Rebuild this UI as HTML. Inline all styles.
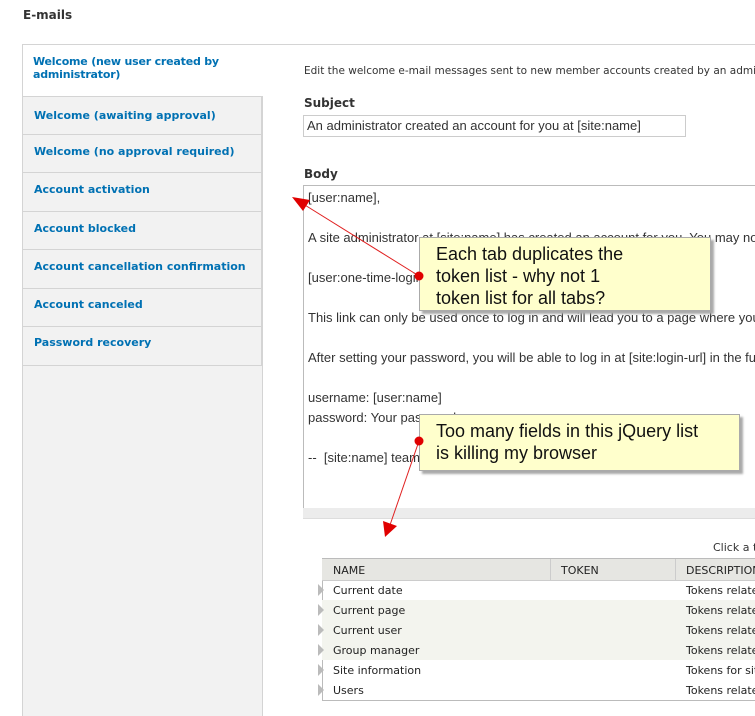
<!DOCTYPE html>
<html><head><style>
html{overflow:hidden}
body{margin:0;width:755px;height:716px;overflow:hidden;background:#fff;position:relative;font-family:"DejaVu Sans","Liberation Sans",sans-serif}
.a{position:absolute;white-space:nowrap}
.tab{position:absolute;left:22px;width:240px;background:#f2f2f2;border:1px solid #d4d4d4;border-top:none;box-sizing:border-box;color:#0071b3;font-weight:bold;font-size:11px;padding-left:11px;white-space:nowrap}
.ta{font-family:"Liberation Sans",Arial,sans-serif;font-size:13px;color:#333;left:308px}
.tr{position:absolute;left:322px;width:433px;height:20px;font-size:11px;color:#222;overflow:hidden}
.tr span{position:absolute;top:4px;white-space:nowrap}
.tri{position:absolute;left:-4px;top:4px;width:0;height:0;border-left:6px solid #bbb;border-top:6px solid transparent;border-bottom:6px solid transparent}
.call{position:absolute;background:#ffffcc;border:1px solid #aaa;box-shadow:3px 3px 2px #aaa;font-family:"Liberation Sans",Arial,sans-serif;font-size:18px;color:#111;line-height:22px;padding:5px 0 0 16px;box-sizing:border-box;white-space:nowrap}
</style></head><body>
<div class="a" style="left:23px;top:8px;font-size:12px;font-weight:bold;color:#333">E-mails</div>
<div style="position:absolute;left:22px;top:44px;width:733px;height:1px;background:#d4d4d4"></div>
<div style="position:absolute;left:22px;top:44px;width:1px;height:52px;background:#d4d4d4"></div>
<div class="a" style="left:33px;top:55px;font-size:11px;font-weight:bold;color:#0071b3;line-height:13px;letter-spacing:-0.2px">Welcome (new user created by<br>administrator)</div>
<div style="position:absolute;left:22px;top:96px;width:241px;height:620px;background:#f2f2f2;border-left:1px solid #d4d4d4;border-right:1px solid #d4d4d4;box-sizing:border-box"></div>
<div class="tab" style="top:96px;height:39px;line-height:37px;border-top:1px solid #d4d4d4">Welcome (awaiting approval)</div>
<div class="tab" style="top:135px;height:38px;line-height:34px">Welcome (no approval required)</div>
<div class="tab" style="top:173px;height:39px;line-height:34px">Account activation</div>
<div class="tab" style="top:212px;height:38px;line-height:33px">Account blocked</div>
<div class="tab" style="top:250px;height:39px;line-height:33px">Account cancellation confirmation</div>
<div class="tab" style="top:289px;height:38px;line-height:32px">Account canceled</div>
<div class="tab" style="top:327px;height:39px;line-height:32px">Password recovery</div>

<div class="a" style="left:304px;top:65px;font-size:10.5px;color:#333">Edit the welcome e-mail messages sent to new member accounts created by an administrator.</div>
<div class="a" style="left:304px;top:96px;font-size:12px;font-weight:bold;color:#333">Subject</div>
<div style="position:absolute;left:303px;top:115px;width:383px;height:22px;border:1px solid #ccc;box-sizing:border-box"></div>
<div class="a" style="left:307px;top:118px;font-family:'Liberation Sans',Arial,sans-serif;font-size:13px;color:#333">An administrator created an account for you at [site:name]</div>
<div class="a" style="left:304px;top:167px;font-size:12px;font-weight:bold;color:#333">Body</div>
<div style="position:absolute;left:303px;top:185px;width:452px;height:324px;border:1px solid #bbb;border-right:none;box-sizing:border-box"></div>
<div style="position:absolute;left:303px;top:508px;width:452px;height:10px;background:#ececec;border-bottom:1px solid #ddd"></div>
<div class="a ta" style="top:190px">[user:name],</div>
<div class="a ta" style="top:230px">A site administrator at [site:name] has created an account for you. You may no</div>
<div class="a ta" style="top:270px">[user:one-time-login-url]</div>
<div class="a ta" style="top:310px">This link can only be used once to log in and will lead you to a page where you</div>
<div class="a ta" style="top:350px">After setting your password, you will be able to log in at [site:login-url] in the fu</div>
<div class="a ta" style="top:390px">username: [user:name]</div>
<div class="a ta" style="top:410px">password: Your password</div>
<div class="a ta" style="top:450px">--&nbsp; [site:name] team</div>

<div class="a" style="left:713px;top:541px;font-size:11px;color:#333">Click a t</div>
<div style="position:absolute;left:322px;top:558px;width:433px;height:143px;border:1px solid #bbb;border-right:none;box-sizing:border-box"></div>
<div class="tr" style="top:559px;height:21px;background:#e6e6e2;border-bottom:1px solid #ccc"><span style="left:11px;top:5px">NAME</span><span style="left:239px;top:5px">TOKEN</span><span style="left:364px;top:5px">DESCRIPTION</span><div style="position:absolute;left:228px;top:0;width:1px;height:21px;background:#ccc"></div><div style="position:absolute;left:353px;top:0;width:1px;height:21px;background:#ccc"></div></div>
<div class="tr" style="top:580px"><span style="left:11px">Current date</span><span style="left:364px">Tokens related</span></div>
<div class="tr" style="top:600px;background:#f3f4ee"><span style="left:11px">Current page</span><span style="left:364px">Tokens related</span></div>
<div class="tr" style="top:620px;background:#f3f4ee"><span style="left:11px">Current user</span><span style="left:364px">Tokens related</span></div>
<div class="tr" style="top:640px;background:#f3f4ee"><span style="left:11px">Group manager</span><span style="left:364px">Tokens related</span></div>
<div class="tr" style="top:660px"><span style="left:11px">Site information</span><span style="left:364px">Tokens for site</span></div>
<div class="tr" style="top:680px"><span style="left:11px">Users</span><span style="left:364px">Tokens related</span></div>
<div class="tri" style="left:318px;top:584px"></div>
<div class="tri" style="left:318px;top:604px"></div>
<div class="tri" style="left:318px;top:624px"></div>
<div class="tri" style="left:318px;top:644px"></div>
<div class="tri" style="left:318px;top:664px"></div>
<div class="tri" style="left:318px;top:684px"></div>

<div class="call" style="left:419px;top:237px;width:292px;height:74px">Each tab duplicates the<br>token list - why not 1<br>token list for all tabs?</div>
<div class="call" style="left:419px;top:414px;width:321px;height:57px">Too many fields in this jQuery list<br>is killing my browser</div>
<svg width="755" height="716" style="position:absolute;left:0;top:0">
<line x1="419" y1="276" x2="300" y2="202" stroke="#e02020" stroke-width="1"/>
<polygon points="292,197 310,200 303,211" fill="#e00000"/>
<circle cx="419" cy="276" r="4.5" fill="#e00000"/>
<line x1="419" y1="441" x2="390" y2="525" stroke="#e02020" stroke-width="1"/>
<polygon points="385,537 383,521 397,526" fill="#e00000"/>
<circle cx="419" cy="441" r="4.5" fill="#e00000"/>
</svg>
</body></html>
